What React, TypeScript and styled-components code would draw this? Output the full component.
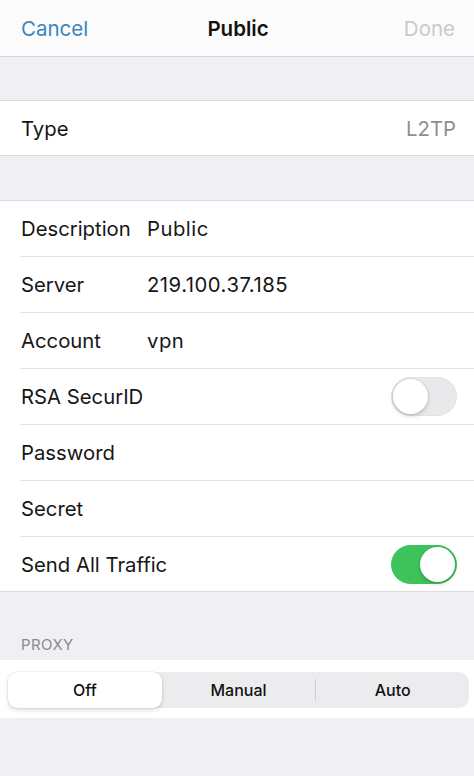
import React from 'react';
import styled, { createGlobalStyle } from 'styled-components';

const GlobalStyle = createGlobalStyle`
    html, body {
        margin: 0;
        padding: 0;
        background: #efeff4;
    }
    body {
        font-family: Inter, "Liberation Sans", Arial, sans-serif;
        -webkit-font-smoothing: antialiased;
    }
`;

const fields = [
    { label: 'Description', value: 'Public' },
    { label: 'Server', value: '219.100.37.185' },
    { label: 'Account', value: 'vpn' },
    { label: 'RSA SecurID', toggle: false },
    { label: 'Password', value: '' },
    { label: 'Secret', value: '' },
    { label: 'Send All Traffic', toggle: true }
];

const proxyModes = ['Off', 'Manual', 'Auto'];

function App() {
    return (
        <Screen>
            <GlobalStyle />
            <NavBar>
                <NavButton>Cancel</NavButton>
                <NavTitle>Public</NavTitle>
                <NavButton disabled>Done</NavButton>
            </NavBar>

            <Gap $height={43} />

            <Group>
                <Row>
                    <RowInner $last $height={54}>
                        <Label>Type</Label>
                        <Detail>L2TP</Detail>
                    </RowInner>
                </Row>
            </Group>

            <Gap $height={44} />

            <Group>
                {fields.map((field, i) => (
                    <Row key={field.label}>
                        <RowInner $last={i === fields.length - 1} $height={i === fields.length - 1 ? 54 : 55}>
                            <Label $fixed>{field.label}</Label>
                            {field.toggle === undefined ? (
                                <Value>{field.value}</Value>
                            ) : (
                                <Switch $on={field.toggle}>
                                    <Knob />
                                </Switch>
                            )}
                        </RowInner>
                    </Row>
                ))}
            </Group>

            <SectionHeader>PROXY</SectionHeader>

            <SegmentBar>
                <Segmented>
                    {proxyModes.map((mode, i) => (
                        <Segment key={mode} $active={i === 0} $divider={i === 2}>
                            {mode}
                        </Segment>
                    ))}
                </Segmented>
            </SegmentBar>

            <Gap $height={58} />
        </Screen>
    );
}

const Screen = styled.div`
    width: 474px;
    min-height: 776px;
    background: #efeff4;
    overflow: hidden;
`;

const NavBar = styled.header`
    height: 56px;
    background: #fbfbfc;
    border-bottom: 1px solid #d6d6da;
    display: grid;
    grid-template-columns: 1fr auto 1fr;
    align-items: center;
    padding: 0 19px 0 21px;
`;

const NavButton = styled.span<{ disabled?: boolean }>`
    font-size: 20.5px;
    color: ${p => (p.disabled ? '#c9c9cc' : '#3a86c0')};
    justify-self: ${p => (p.disabled ? 'end' : 'start')};
`;

const NavTitle = styled.span`
    font-size: 20.5px;
    font-weight: 600;
    color: #111;
`;

const Gap = styled.div<{ $height: number }>`
    height: ${p => p.$height}px;
`;

const Group = styled.section`
    background: #fff;
    border-top: 1px solid #dcdce0;
    border-bottom: 1px solid #dcdce0;
`;

const Row = styled.div`
    padding-left: 20px;
`;

const RowInner = styled.div<{ $last?: boolean; $height: number }>`
    height: ${p => p.$height}px;
    display: flex;
    align-items: center;
    padding: 0 17px 0 1px;
    border-bottom: ${p => (p.$last ? 'none' : '1px solid #e2e2e6')};
`;

const Label = styled.span<{ $fixed?: boolean }>`
    font-size: 20.3px;
    color: #161616;
    flex: ${p => (p.$fixed ? '0 0 126px' : '1')};
    white-space: nowrap;
`;

const Detail = styled.span`
    font-size: 20.3px;
    color: #8e8e93;
    padding-right: 1px;
`;

const Value = styled.span`
    font-size: 20.3px;
    letter-spacing: 0.5px;
    color: #161616;
    flex: 1;
`;

const Switch = styled.div<{ $on: boolean }>`
    margin-left: auto;
    width: 66px;
    height: 39px;
    border-radius: 20px;
    box-sizing: border-box;
    padding: 1px;
    display: flex;
    justify-content: ${p => (p.$on ? 'flex-end' : 'flex-start')};
    background: ${p => (p.$on ? '#3ec25c' : '#e9e9eb')};
    border: 1px solid ${p => (p.$on ? '#3ec25c' : '#e2e2e4')};
`;

const Knob = styled.div`
    width: 35px;
    height: 35px;
    border-radius: 50%;
    background: #fff;
    box-shadow: 0 2px 4px rgba(0, 0, 0, 0.18), 0 0 0 1px rgba(0, 0, 0, 0.05);
`;

const SectionHeader = styled.div`
    height: 68px;
    box-sizing: border-box;
    padding: 0 0 6px 21px;
    display: flex;
    align-items: flex-end;
    font-size: 15px;
    letter-spacing: 0.4px;
    color: #8a8a8f;
`;

const SegmentBar = styled.div`
    background: #fff;
    height: 58px;
    padding: 12px 5px 0 8px;
    box-sizing: border-box;
`;

const Segmented = styled.div`
    height: 36px;
    border-radius: 10px;
    background: #ececee;
    display: grid;
    grid-template-columns: repeat(3, 1fr);
`;

const Segment = styled.div<{ $active: boolean; $divider: boolean }>`
    display: flex;
    align-items: center;
    justify-content: center;
    font-size: 16px;
    font-weight: 500;
    color: #111;
    background: ${p => (p.$active ? '#fff' : 'transparent')};
    box-shadow: ${p => (p.$active ? '0 2px 4px rgba(0,0,0,0.14), 0 0 0 0.5px rgba(0,0,0,0.08)' : 'none')};
    border-left: ${p => (p.$divider ? '1px solid #cfcfd2' : 'none')};
    border-radius: ${p => (p.$divider ? '0' : '9px')};
    height: ${p => (p.$divider ? '22px' : 'auto')};
    align-self: ${p => (p.$divider ? 'center' : 'stretch')};
`;

export default App;
